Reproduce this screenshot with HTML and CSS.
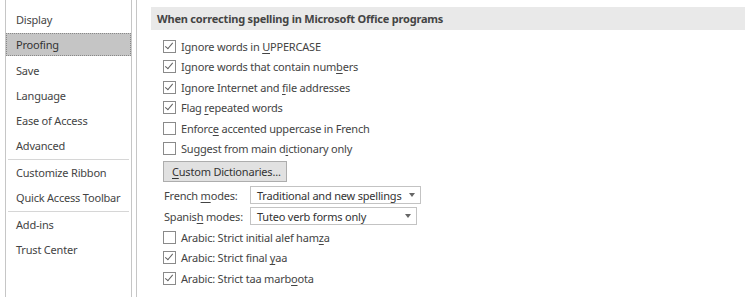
FILE: index.html
```html
<!DOCTYPE html>
<html>
<head>
<meta charset="utf-8">
<link rel="stylesheet" href="styles.css">
</head>
<body>
<div class="app">
  <nav class="nav">
    <div class="nav-item">Display</div>
    <div class="nav-item selected">Proofing</div>
    <div class="nav-item">Save</div>
    <div class="nav-item">Language</div>
    <div class="nav-item">Ease of Access</div>
    <div class="nav-item">Advanced</div>
    <div class="nav-sep"></div>
    <div class="nav-item">Customize Ribbon</div>
    <div class="nav-item">Quick Access Toolbar</div>
    <div class="nav-sep"></div>
    <div class="nav-item">Add-ins</div>
    <div class="nav-item">Trust Center</div>
  </nav>
  <main class="content">
    <div class="section-head">When correcting spelling in Microsoft Office programs</div>
    <div class="options">
      <label class="row"><span class="box checked"></span><span>Ignore words in <u>U</u>PPERCASE</span></label>
      <label class="row"><span class="box checked"></span><span>Ignore words that contain num<u>b</u>ers</span></label>
      <label class="row"><span class="box checked"></span><span>Ignore Internet and <u>f</u>ile addresses</span></label>
      <label class="row"><span class="box checked"></span><span>Flag <u>r</u>epeated words</span></label>
      <label class="row"><span class="box"></span><span>Enforc<u>e</u> accented uppercase in French</span></label>
      <label class="row"><span class="box"></span><span>Suggest from main d<u>i</u>ctionary only</span></label>
      <div class="btn"><u>C</u>ustom Dictionaries...</div>
      <div class="mode mode-fr"><span class="mode-label">French <u>m</u>odes:</span><div class="select sel-fr"><span>Traditional and new spellings</span><span class="arrow"></span></div></div>
      <div class="mode mode-es"><span class="mode-label">Spanis<u>h</u> modes:</span><div class="select sel-es"><span>Tuteo verb forms only</span><span class="arrow"></span></div></div>
      <label class="row"><span class="box"></span><span>Arabic: Strict initial alef ham<u>z</u>a</span></label>
      <label class="row"><span class="box checked"></span><span>Arabic: Strict final <u>y</u>aa</span></label>
      <label class="row"><span class="box checked"></span><span>Arabic: Strict taa marb<u>o</u>ota</span></label>
    </div>
  </main>
</div>
</body>
</html>
```
FILE: styles.css
```css
html, body {
  margin: 0;
  padding: 0;
  background: #ffffff;
}
body {
  font-family: "Noto Sans", "Open Sans", sans-serif;
  font-size: 11px;
  letter-spacing: -0.2px;
  color: #444444;
  width: 750px;
  height: 297px;
  overflow: hidden;
}
u {
  text-decoration: underline;
  text-underline-offset: 2px;
}
.app {
  display: flex;
  height: 297px;
}
.nav {
  margin-left: 5px;
  width: 125px;
  border-left: 1px solid #c6c6c6;
  border-right: 1px solid #c6c6c6;
  padding-top: 7px;
  flex: none;
}
.nav-item {
  height: 25px;
  line-height: 25px;
  padding-left: 10px;
  white-space: nowrap;
}
.nav-item.selected {
  height: 21px;
  line-height: 21px;
  margin: 1px 0 2px 0;
  background: #c5c5c5;
  border: 1px dotted #888888;
  padding-left: 9px;
  color: #333333;
}
.nav-sep {
  height: 1px;
  background: #d6d6d6;
  margin: 1px 2px 0 2px;
}
.content {
  margin-left: 4px;
  border-left: 1px solid #c6c6c6;
  flex: 1;
  padding: 7px 5px 0 14px;
}
.section-head {
  height: 23px;
  line-height: 23px;
  background: #e9e9e9;
  padding-left: 6px;
  font-weight: bold;
  color: #444444;
}
.options {
  margin-top: 6px;
  padding-left: 12px;
}
.row {
  display: flex;
  align-items: center;
  height: 20.5px;
  white-space: nowrap;
}
.box {
  width: 11px;
  height: 11px;
  border: 1px solid #8a8a8a;
  background: #ffffff;
  margin-right: 5px;
  flex: none;
  position: relative;
}
.box.checked::after {
  content: "";
  position: absolute;
  left: 3px;
  top: 0px;
  width: 3px;
  height: 7px;
  border-right: 1.5px solid #606060;
  border-bottom: 1.5px solid #606060;
  transform: rotate(40deg);
}
.btn {
  margin-top: 2px;
  width: 122px;
  height: 19px;
  line-height: 19px;
  border: 1px solid #adadad;
  background: #e1e1e1;
  white-space: nowrap;
  text-indent: 8px;
  color: #333333;
}
.mode {
  display: flex;
  align-items: center;
  white-space: nowrap;
}
.mode-fr {
  margin-top: 4px;
}
.mode-es {
  margin-top: 3px;
}
.mode-label {
  width: 86px;
  padding-left: 1px;
  flex: none;
}
.select {
  height: 16px;
  border: 1px solid #c3c3c3;
  background: #ffffff;
  display: flex;
  align-items: center;
  justify-content: space-between;
  padding: 0 5px 0 6px;
  color: #333333;
}
.sel-fr {
  width: 158px;
}
.sel-es {
  width: 154px;
}
.arrow {
  width: 0;
  height: 0;
  border-left: 3.5px solid transparent;
  border-right: 3.5px solid transparent;
  border-top: 4px solid #666666;
}
.mode-es + .row {
  margin-top: 2px;
}
```
